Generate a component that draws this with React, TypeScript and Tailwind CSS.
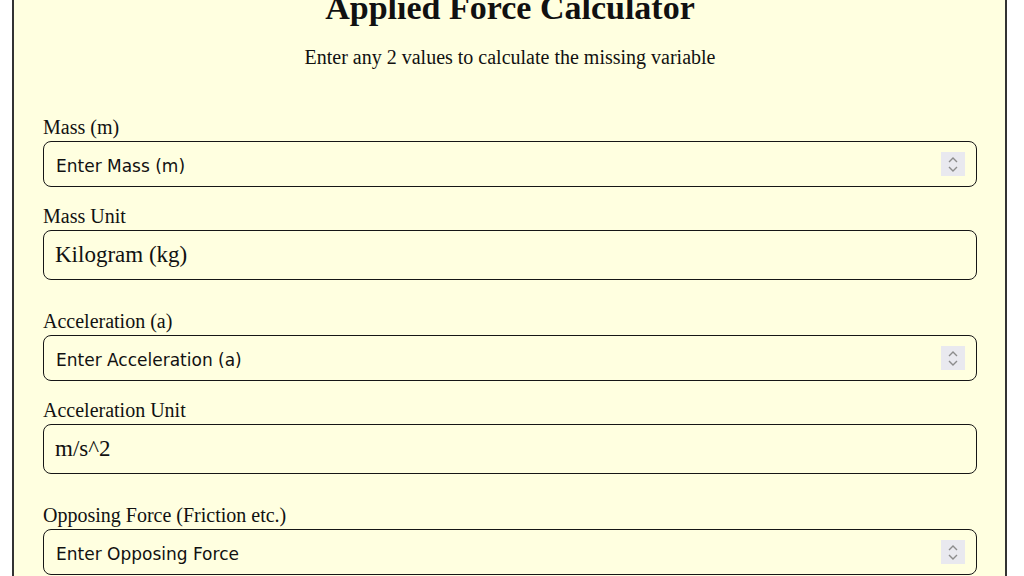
import { useState } from 'react';

// Small stand-in for the browser's number spinner, which the reference shows on every field
const Spinner = () => (
  <div className="pointer-events-none absolute right-[12px] top-1/2 flex h-[24px] w-[24px] -translate-y-1/2 flex-col items-center justify-center gap-[3px] bg-[#e9e9ef]">
    <svg width="10" height="6" viewBox="0 0 10 6" fill="none">
      <path d="M1 5 L5 1 L9 5" stroke="#8c8c8c" strokeWidth="1.4" />
    </svg>
    <svg width="10" height="6" viewBox="0 0 10 6" fill="none">
      <path d="M1 1 L5 5 L9 1" stroke="#8c8c8c" strokeWidth="1.4" />
    </svg>
  </div>
);

const NumberField = ({ label, placeholder }: { label: string; placeholder: string }) => {
  const [value, setValue] = useState('');
  return (
    <div>
      <label className="block text-[20px] leading-[24px]">{label}</label>
      <div className="relative mt-[2px]">
        <input
          type="text"
          inputMode="decimal"
          value={value}
          onChange={(e) => setValue(e.target.value)}
          placeholder={placeholder}
          className="block h-[46px] w-full rounded-[8px] border border-[#161616] bg-transparent pl-[12px] pr-[48px] pt-[3px] font-['DejaVu_Sans',sans-serif] text-[17px] text-[#111] placeholder:text-[#111] outline-none"
        />
        <Spinner />
      </div>
    </div>
  );
};

const UnitField = ({ label, options }: { label: string; options: string[] }) => (
  <div className="mt-[17px]">
    <label className="block text-[20px] leading-[24px]">{label}</label>
    <select className="mt-[2px] block h-[50px] w-full appearance-none rounded-[8px] border border-[#161616] bg-transparent pl-[11px] font-['Liberation_Serif',serif] text-[23px] text-[#111] outline-none">
      {options.map((o) => (
        <option key={o}>{o}</option>
      ))}
    </select>
  </div>
);

export default function App() {
  return (
    <div className="min-h-screen bg-white font-['Liberation_Serif','Times_New_Roman',serif] text-[#111]">
      <div className="mx-[12px] -mt-[14px] w-[995px] border-2 border-[#333] bg-[#ffffe0] pb-[40px] pl-[29px] pr-[28px]">
        <h1 className="text-center text-[34px] font-bold leading-[40px]">Applied Force Calculator</h1>
        <p className="mt-[17px] text-center text-[20px] leading-[24px]">
          Enter any 2 values to calculate the missing variable
        </p>

        <div className="mt-[46px]">
          <NumberField label="Mass (m)" placeholder="Enter Mass (m)" />
          <UnitField label="Mass Unit" options={['Kilogram (kg)', 'Gram (g)', 'Pound (lb)']} />
        </div>

        <div className="mt-[29px]">
          <NumberField label="Acceleration (a)" placeholder="Enter Acceleration (a)" />
          <UnitField label="Acceleration Unit" options={['m/s^2', 'ft/s^2']} />
        </div>

        <div className="mt-[29px]">
          <NumberField label="Opposing Force (Friction etc.)" placeholder="Enter Opposing Force" />
          <UnitField label="Opposing Force Unit" options={['Newton (N)', 'Kilonewton (kN)']} />
        </div>
      </div>
    </div>
  );
}
